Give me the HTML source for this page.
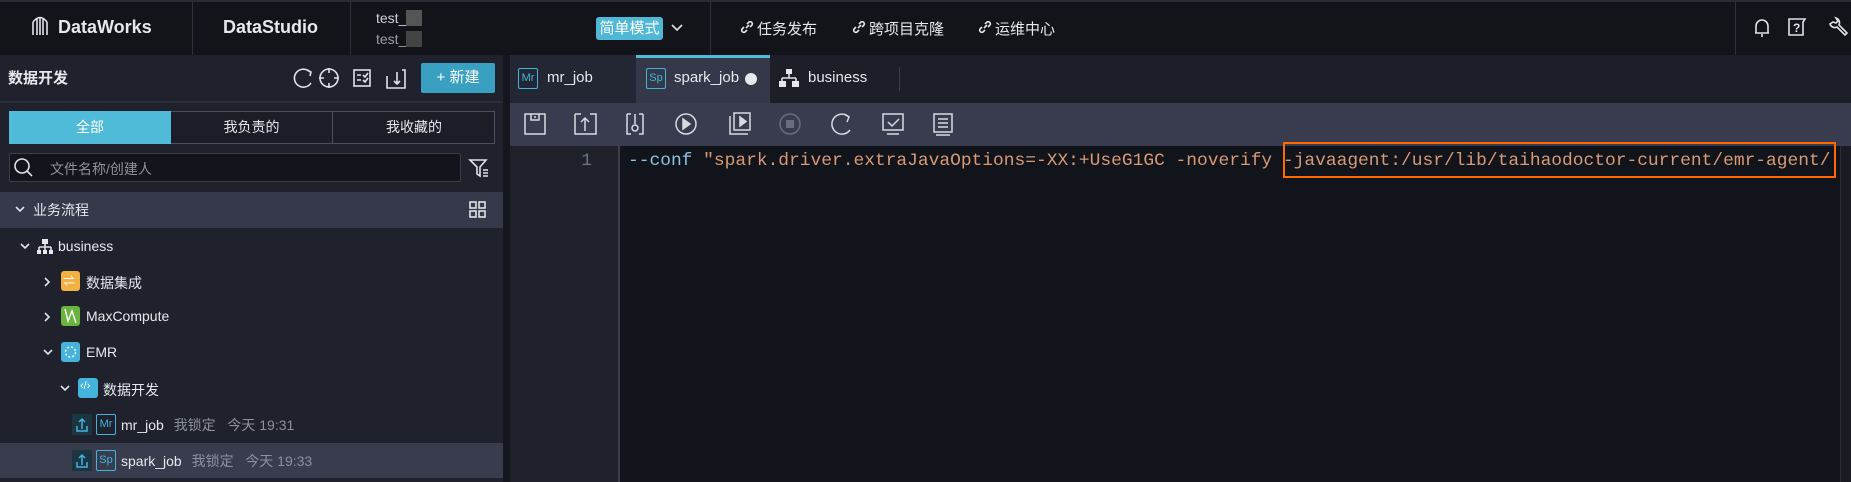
<!DOCTYPE html>
<html><head><meta charset="utf-8">
<style>
*{margin:0;padding:0;box-sizing:border-box}
body{width:1851px;height:482px;overflow:hidden;background:#1b1d26;font-family:"Liberation Sans","Noto Sans CJK SC",sans-serif;color:#e6e8ee;position:relative}
.a{position:absolute}
.top{left:0;top:0;width:1851px;height:55px;background:#12141a;border-top:2px solid #2a2c33}
.vd{width:1px;background:#2e3139}
.t{white-space:nowrap}
.ic{stroke:#e0e2e8;fill:none;stroke-width:1.6}
.row{left:0;width:503px;height:36px}
.code{font-family:"Liberation Mono","DejaVu Sans Mono",monospace;font-size:17.9px;white-space:pre}
</style></head><body>
<div class="a top"></div>
<svg class="a" style="left:30px;top:15px" width="20" height="22" viewBox="0 0 20 22"><path d="M3 20V7M7 20V4M10 20V2M13 20V4M17 20V7M3 7Q10 -2 17 7" class="ic" stroke-width="1.8"/></svg>
<div class="a t" style="left:58px;top:17px;font-size:18px;font-weight:bold">DataWorks</div>
<div class="a vd" style="left:192px;top:2px;height:53px"></div>
<div class="a t" style="left:223px;top:17px;font-size:18px;font-weight:bold">DataStudio</div>
<div class="a vd" style="left:350px;top:2px;height:53px"></div>
<div class="a t" style="left:376px;top:10px;font-size:14px;color:#cfd2da">test_<span style="background:#555;color:#555">__</span></div>
<div class="a t" style="left:376px;top:31px;font-size:14px;color:#9a9ea8">test_<span style="background:#444;color:#444">__</span></div>
<div class="a t" style="left:596px;top:17px;width:67px;height:23px;background:#4fb8d6;border-radius:3px;font-size:15px;text-align:center;line-height:23px;color:#fff">简单模式</div>
<svg class="a" style="left:671px;top:23px" width="12" height="10"><path d="M1 2l5 5 5-5" class="ic"/></svg>
<div class="a vd" style="left:710px;top:2px;height:53px"></div>
<svg class="a" style="left:740px;top:20px" width="14" height="14"><path d="M6 8l3-3M4 7l-2 2a2.2 2.2 0 0 0 3 3l2-2M10 7l2-2a2.2 2.2 0 0 0-3-3L7 4" class="ic" stroke-width="1.3"/></svg>
<div class="a t" style="left:757px;top:18px;font-size:15px">任务发布</div>
<svg class="a" style="left:852px;top:20px" width="14" height="14"><path d="M6 8l3-3M4 7l-2 2a2.2 2.2 0 0 0 3 3l2-2M10 7l2-2a2.2 2.2 0 0 0-3-3L7 4" class="ic" stroke-width="1.3"/></svg>
<div class="a t" style="left:869px;top:18px;font-size:15px">跨项目克隆</div>
<svg class="a" style="left:978px;top:20px" width="14" height="14"><path d="M6 8l3-3M4 7l-2 2a2.2 2.2 0 0 0 3 3l2-2M10 7l2-2a2.2 2.2 0 0 0-3-3L7 4" class="ic" stroke-width="1.3"/></svg>
<div class="a t" style="left:995px;top:18px;font-size:15px">运维中心</div>
<div class="a vd" style="left:1735px;top:2px;height:53px"></div>
<svg class="a" style="left:1752px;top:16px" width="20" height="22"><path d="M4 17V10a6 6 0 0 1 12 0v7H3h14M10 18v3" class="ic"/></svg>
<svg class="a" style="left:1787px;top:17px" width="20" height="20"><path d="M2 2h16l-2 3v13H2z" class="ic"/><text x="6" y="15" font-size="12" fill="#e0e2e8" font-family="Liberation Sans" font-weight="bold">?</text></svg>
<svg class="a" style="left:1827px;top:16px" width="22" height="22"><path d="M3 8a5 5 0 0 0 7 3l8 8 2-2-8-8a5 5 0 0 0-3-7l2 3-2 2-3-1z" class="ic"/></svg>

<!-- left panel -->
<div class="a" style="left:0;top:55px;width:503px;height:427px;background:#1f212c"></div>
<div class="a" style="left:503px;top:55px;width:7px;height:427px;background:#15171e"></div>
<div class="a t" style="left:8px;top:67px;font-size:15px;font-weight:bold">数据开发</div>
<svg class="a" style="left:291px;top:66px" width="130" height="26"><path d="M19 6A9 9 0 1 0 20 17" class="ic"/><path d="M16 4l4 2-1 4" class="ic"/><circle cx="38" cy="12" r="9" class="ic"/><path d="M38 2v5M38 17v5M28 12h5M43 12h5" class="ic"/><rect x="63" y="4" width="16" height="16" class="ic"/><path d="M66 9h4M66 14h4M72 9l2 2 3-4M72 14l2 2 3-4" class="ic" stroke-width="1.2"/><path d="M96 10v12h18V4h-3M106 6v12M103 15l3 3 3-3" class="ic"/></svg>
<div class="a t" style="left:421px;top:63px;width:74px;height:30px;background:#3aa0c2;border-radius:2px;font-size:15px;text-align:center;line-height:30px;color:#fff">+ 新建</div>
<div class="a" style="left:0;top:101px;width:503px;height:2px;background:#2c2f3b"></div>
<div class="a" style="left:9px;top:111px;width:486px;height:33px;border:1px solid #4a4e5e;background:#1b1d27"></div>
<div class="a t" style="left:9px;top:111px;width:162px;height:33px;background:#4fbbd9;text-align:center;line-height:33px;font-size:14px;color:#fff">全部</div>
<div class="a t" style="left:171px;top:111px;width:162px;height:33px;border-right:1px solid #4a4e5e;text-align:center;line-height:33px;font-size:14px">我负责的</div>
<div class="a t" style="left:333px;top:111px;width:162px;height:33px;text-align:center;line-height:33px;font-size:14px">我收藏的</div>
<div class="a" style="left:9px;top:153px;width:452px;height:29px;border:1px solid #3a3d4a;background:#13151c;border-radius:2px"></div>
<svg class="a" style="left:13px;top:157px" width="22" height="22"><circle cx="9" cy="9" r="7" class="ic" stroke-width="2.4"/><path d="M14 14l5 5" class="ic" stroke-width="2.6"/></svg>
<div class="a t" style="left:50px;top:159px;font-size:14px;color:#8d919c">文件名称/创建人</div>
<svg class="a" style="left:468px;top:157px" width="24" height="22"><path d="M2 3h16l-6 7v9l-3-2v-7z" class="ic"/><path d="M15 13h5M15 16h5M15 19h5" class="ic" stroke-width="1.2"/></svg>
<div class="a row" style="top:192px;background:#363949"></div>
<svg class="a" style="left:14px;top:204px" width="12" height="10"><path d="M2 3l4 4 4-4" class="ic" stroke-width="1.4"/></svg>
<div class="a t" style="left:33px;top:200px;font-size:14px">业务流程</div>
<svg class="a" style="left:469px;top:201px" width="18" height="18"><rect x="1" y="1" width="6" height="6" class="ic" stroke-width="1.3"/><rect x="10" y="1" width="6" height="6" class="ic" stroke-width="1.3"/><rect x="1" y="10" width="6" height="6" class="ic" stroke-width="1.3"/><rect x="10" y="10" width="6" height="6" class="ic" stroke-width="1.3"/></svg>
<!-- tree -->
<svg class="a" style="left:19px;top:241px" width="12" height="10"><path d="M2 3l4 4 4-4" class="ic" stroke-width="1.4"/></svg>
<svg class="a" style="left:36px;top:238px" width="18" height="18"><rect x="6" y="1" width="6" height="5" fill="#e6e8ee"/><path d="M9 6v3M3 9h12M3 9v3M9 9v3M15 9v3" class="ic" stroke-width="1.3"/><rect x="1" y="12" width="4" height="4" fill="#e6e8ee"/><rect x="7" y="12" width="4" height="4" fill="#e6e8ee"/><rect x="13" y="12" width="4" height="4" fill="#e6e8ee"/></svg>
<div class="a t" style="left:58px;top:238px;font-size:14px">business</div>

<svg class="a" style="left:42px;top:276px" width="10" height="12"><path d="M3 2l4 4-4 4" class="ic" stroke-width="1.4"/></svg>
<div class="a" style="left:61px;top:271px;width:19px;height:20px;background:#f2b142;border-radius:3px"></div>
<div class="a t" style="left:63px;top:272px;font-size:12px;color:#fff">⇌</div>
<div class="a t" style="left:86px;top:273px;font-size:14px">数据集成</div>

<svg class="a" style="left:42px;top:311px" width="10" height="12"><path d="M3 2l4 4-4 4" class="ic" stroke-width="1.4"/></svg>
<div class="a" style="left:61px;top:306px;width:19px;height:20px;background:#68b43c;border-radius:3px"></div>
<svg class="a" style="left:61px;top:306px" width="19" height="20"><path d="M4 3l3 12 4-10 4 12" stroke="#fff" fill="none" stroke-width="1.5"/></svg>
<div class="a t" style="left:86px;top:308px;font-size:14px">MaxCompute</div>

<svg class="a" style="left:42px;top:347px" width="12" height="10"><path d="M2 3l4 4 4-4" class="ic" stroke-width="1.4"/></svg>
<div class="a" style="left:61px;top:342px;width:19px;height:20px;background:#45b4dc;border-radius:3px"></div>
<svg class="a" style="left:61px;top:342px" width="19" height="20"><circle cx="9.5" cy="10" r="5" stroke="#fff" fill="none" stroke-width="1.5" stroke-dasharray="2 2"/></svg>
<div class="a t" style="left:86px;top:344px;font-size:14px">EMR</div>

<svg class="a" style="left:59px;top:383px" width="12" height="10"><path d="M2 3l4 4 4-4" class="ic" stroke-width="1.4"/></svg>
<div class="a" style="left:78px;top:378px;width:20px;height:20px;background:#45b4dc;border-radius:3px"></div>
<div class="a t" style="left:80px;top:380px;font-size:11px;color:#fff">‹/›</div>
<div class="a t" style="left:103px;top:380px;font-size:14px">数据开发</div>

<div class="a row" style="top:443px;height:35px;background:#393c4d"></div>
<div class="a" style="left:72px;top:414px;width:20px;height:21px;background:#1c3542"></div>
<svg class="a" style="left:72px;top:414px" width="20" height="21"><path d="M5 12v5h10v-5M10 15V5M7 8l3-3 3 3" stroke="#45b4dc" fill="none" stroke-width="1.5"/></svg>
<div class="a t" style="left:96px;top:414px;width:20px;height:21px;border:1.5px solid #45b4dc;border-radius:2px;font-size:11px;color:#45b4dc;text-align:center;line-height:18px">Mr</div>
<div class="a t" style="left:121px;top:415px;font-size:14px">mr_job <span style="color:#8d919c;margin-left:6px">我锁定&nbsp;&nbsp; 今天 19:31</span></div>
<div class="a" style="left:72px;top:450px;width:20px;height:21px;background:#1c3542"></div>
<svg class="a" style="left:72px;top:450px" width="20" height="21"><path d="M5 12v5h10v-5M10 15V5M7 8l3-3 3 3" stroke="#45b4dc" fill="none" stroke-width="1.5"/></svg>
<div class="a t" style="left:96px;top:450px;width:20px;height:21px;border:1.5px solid #45b4dc;border-radius:2px;font-size:11px;color:#45b4dc;text-align:center;line-height:18px">Sp</div>
<div class="a t" style="left:121px;top:451px;font-size:14px">spark_job <span style="color:#8d919c;margin-left:6px">我锁定&nbsp;&nbsp; 今天 19:33</span></div>

<!-- editor -->
<div class="a" style="left:510px;top:55px;width:1341px;height:48px;background:#1c1e28"></div>
<div class="a" style="left:510px;top:55px;width:126px;height:48px;background:#232633"></div>
<div class="a" style="left:636px;top:55px;width:134px;height:48px;background:#353848;border-top:3px solid #4fbbd9"></div>
<div class="a t" style="left:518px;top:68px;width:20px;height:21px;border:1.5px solid #45b4dc;border-radius:2px;font-size:11px;color:#45b4dc;text-align:center;line-height:18px">Mr</div>
<div class="a t" style="left:547px;top:69px;font-size:15px">mr_job</div>
<div class="a t" style="left:646px;top:68px;width:20px;height:21px;border:1.5px solid #45b4dc;border-radius:2px;font-size:11px;color:#45b4dc;text-align:center;line-height:18px">Sp</div>
<div class="a t" style="left:674px;top:69px;font-size:15px">spark_job</div>
<div class="a" style="left:745px;top:73px;width:12px;height:12px;border-radius:50%;background:#e6e8ee"></div>
<svg class="a" style="left:779px;top:68px" width="20" height="20"><rect x="7" y="1" width="6" height="5" fill="#e6e8ee"/><path d="M10 6v4M3 10h14M3 10v3M17 10v3" class="ic" stroke-width="1.3"/><rect x="0" y="13" width="7" height="6" fill="#e6e8ee"/><rect x="13" y="13" width="7" height="6" fill="#e6e8ee"/></svg>
<div class="a t" style="left:808px;top:69px;font-size:15px">business</div>
<div class="a vd" style="left:899px;top:67px;height:24px;background:#3a3d48"></div>
<div class="a" style="left:510px;top:103px;width:1341px;height:43px;background:#393c4e"></div>
<svg class="a" style="left:515px;top:106px" width="440" height="38" stroke="#d8dae0" fill="none" stroke-width="1.5">
<rect x="10" y="8" width="20" height="20"/><path d="M16 8v6h8V8M20 10v2"/>
<path d="M60 8h6M75 8h6V28H60V8M70 25V12M66 16l4-4 4 4"/>
<path d="M112 8v20h4M128 8v20h-4M112 8h4M128 8h-4M120 8v10"/><circle cx="120" cy="22" r="3"/>
<circle cx="171" cy="18" r="10"/><path d="M168 13v10l7-5z" fill="#d8dae0"/>
<path d="M215 10v18h18"/><rect x="219" y="7" width="16" height="17"/><path d="M225 11v9l6-4.5z" fill="#d8dae0"/>
<circle cx="275" cy="18" r="10" stroke="#6a6d7a"/><rect x="271" y="14" width="8" height="8" fill="#6a6d7a" stroke="none"/>
<path d="M334 11A10 10 0 1 0 335 24"/><path d="M329 8l5 3-2 5"/>
<rect x="368" y="8" width="20" height="16"/><path d="M372 28h12M373 16l4 4 7-7"/>
<rect x="419" y="8" width="18" height="18"/><path d="M423 13h10M423 17h10M423 21h10M421 29h14"/>
</svg>
<div class="a" style="left:510px;top:146px;width:108px;height:336px;background:#1f212b"></div>
<div class="a" style="left:618px;top:146px;width:1222px;height:336px;background:#12141b;border-left:2px solid #3c3f4a"></div>
<div class="a" style="left:1840px;top:146px;width:11px;height:336px;background:#1a1c24;border-left:1px solid #2a2d38"></div>
<div class="a code" style="left:560px;top:151px;width:32px;text-align:right;color:#6d7180">1</div>
<div class="a code" style="left:628px;top:151px;color:#d89a76"><span style="color:#8ec3e0">--conf</span> "spark.driver.extraJavaOptions=-XX:+UseG1GC -noverify -javaagent:/usr/lib/taihaodoctor-current/emr-agent/</div>
<div class="a" style="left:1283px;top:142px;width:553px;height:36px;border:2px solid #ff6a00"></div>
</body></html>
